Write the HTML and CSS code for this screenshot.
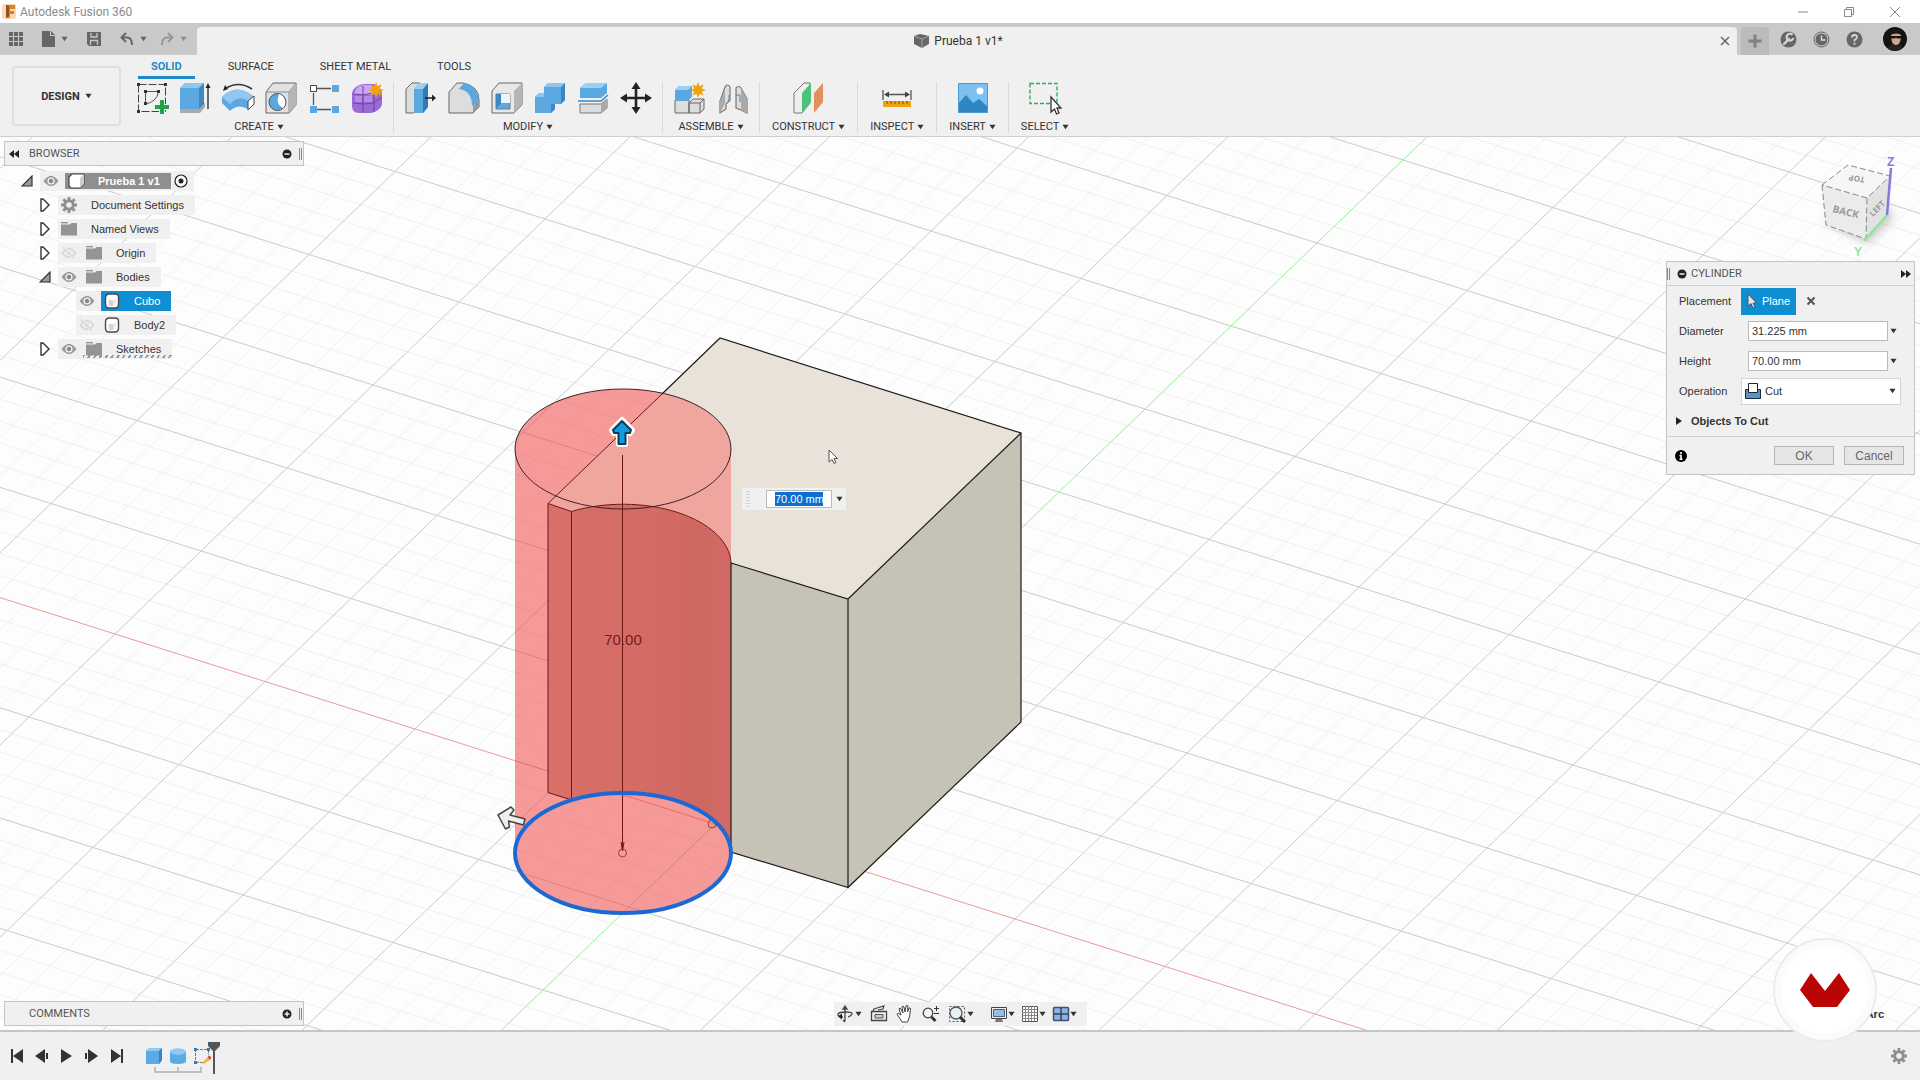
FILE: index.html
```html
<!DOCTYPE html>
<html lang="en">
<head>
	<meta charset="UTF-8">
	<meta name="viewport" content="width=device-width, initial-scale=1.0">
	<title>Autodesk Fusion 360</title>
	<link rel="stylesheet" href="styles.css">
</head>
<body>
	<!-- Shared symbols -->
	<svg class="symbols" aria-hidden="true">
		<symbol id="caret" viewBox="0 0 8 6"><path d="M0.5 0.5h7L4 5.5z" fill="currentColor"/></symbol>
		<symbol id="eye" viewBox="0 0 16 12">
			<path d="M0.5 6Q8-4 15.5 6Q8 16 0.5 6z" fill="#999"/>
			<circle cx="8" cy="6" r="3.6" fill="#f0f0f0"/><circle cx="8" cy="6" r="2.2" fill="#888"/>
		</symbol>
		<symbol id="eye-off" viewBox="0 0 16 12">
			<path d="M1.5 6Q8-2.5 14.5 6Q8 14.5 1.5 6z" fill="none" stroke="#d3d5d8" stroke-width="1.6"/>
			<circle cx="8" cy="6" r="2.2" fill="#d3d5d8"/><path d="M3 0l10 12" stroke="#f0f0f0" stroke-width="2.5"/><path d="M2 0.5l11 11" stroke="#d3d5d8" stroke-width="1.2"/>
		</symbol>
		<symbol id="folder" viewBox="0 0 16 14">
			<path d="M0 2.5h9l1.5-1.5H16v12.5H0z" fill="#949494"/><path d="M0 0.7h7" stroke="#949494" stroke-width="1.4"/>
		</symbol>
		<symbol id="body" viewBox="0 0 16 16">
			<path d="M1.5 4.5Q2 1 5 1H11Q14.5 1 14.5 4V11Q14.5 15 11 15H5Q1.5 15 1.5 11z" fill="#fff" stroke="#4a4a4a" stroke-width="1.4"/>
			<path d="M4.5 7h4.5v6H6Q4.5 13 4.5 11z" fill="#d5d5d5"/><path d="M9 7l3-2v6l-3 2z" fill="#ececec"/>
		</symbol>
		<symbol id="gear" viewBox="0 0 16 16">
			<circle cx="8" cy="8" r="4.3" fill="none" stroke="#8f8f8f" stroke-width="3"/>
			<path d="M8 0v3M8 13v3M0 8h3M13 8h3M2.3 2.3l2.2 2.2M11.5 11.5l2.2 2.2M13.7 2.3l-2.2 2.2M4.5 11.5l-2.2 2.2" stroke="#8f8f8f" stroke-width="2.8"/>
		</symbol>
		<symbol id="closed" viewBox="0 0 10 14"><path d="M1 1v12h2l6-6-6-6z" fill="#fff" stroke="#333" stroke-width="1.4"/></symbol>
		<symbol id="open" viewBox="0 0 12 12"><path d="M11 1v10H1z" fill="#999" stroke="#333" stroke-width="1.2"/></symbol>
		<symbol id="star" viewBox="0 0 16 16"><path d="M8 0l1.6 4.2 4.1-1.9-1.9 4.1L16 8l-4.2 1.6 1.9 4.1-4.1-1.9L8 16l-1.6-4.2-4.1 1.9 1.9-4.1L0 8l4.2-1.6-1.9-4.1 4.1 1.9z" fill="#f0a30a"/></symbol>
	</svg>

	<header class="titlebar">
		<svg class="app-logo" width="14" height="15" viewBox="0 0 14 15"><rect width="14" height="15" rx="2" fill="#fbd9b8"/><path d="M4 1h9v4H8v2h4v3H8v4H4z" fill="#d98324"/><path d="M4 1l3 1v10l-3 2z" fill="#8a5320"/></svg>
		<span class="app-name">Autodesk Fusion 360</span>
		<div class="window-buttons">
			<button aria-label="Minimize"><svg width="12" height="12" viewBox="0 0 12 12"><path d="M1 6h10" stroke="#888"/></svg></button>
			<button aria-label="Restore"><svg width="12" height="12" viewBox="0 0 12 12"><path d="M1.5 3.5h7v7h-7zM3.5 3.5v-2h7v7h-2" fill="none" stroke="#888"/></svg></button>
			<button aria-label="Close"><svg width="12" height="12" viewBox="0 0 12 12"><path d="M1 1l10 10M11 1L1 11" stroke="#888"/></svg></button>
		</div>
	</header>

	<div class="tabbar">
		<div class="quick">
			<button aria-label="Data panel"><svg width="14" height="14" viewBox="0 0 14 14" fill="#666"><path d="M0 0h4v4H0zM5 0h4v4H5zM10 0h4v4h-4zM0 5h4v4H0zM5 5h4v4H5zM10 5h4v4h-4zM0 10h4v4H0zM5 10h4v4H5zM10 10h4v4h-4z"/></svg></button>
			<button class="drop" aria-label="File"><svg width="13" height="16" viewBox="0 0 13 16"><path d="M0 0h8v5h5v11H0z" fill="#666"/><path d="M9 0l4 4H9z" fill="#666"/></svg><svg class="caret"><use href="#caret"/></svg></button>
			<button aria-label="Save"><svg width="14" height="14" viewBox="0 0 14 14"><path d="M0 0h14v14H2l-2-2z" fill="#666"/><path d="M4 1v4h6V1M3.5 13V8.5h7V13" fill="none" stroke="#c9c9c9" stroke-width="1.3"/></svg></button>
			<button class="drop" aria-label="Undo"><svg width="14" height="14" viewBox="0 0 14 14"><path d="M6 1L1.5 5.5 6 10M2 5.5h5q5 0 5 7.5" fill="none" stroke="#666" stroke-width="2"/></svg><svg class="caret"><use href="#caret"/></svg></button>
			<button class="drop faded" aria-label="Redo"><svg width="14" height="14" viewBox="0 0 14 14"><path d="M8 1l4.5 4.5L8 10M12 5.5H7q-5 0-5 7.5" fill="none" stroke="#777" stroke-width="2"/></svg><svg class="caret"><use href="#caret"/></svg></button>
		</div>
		<div class="doc-tab">
			<div class="doc-title">
				<svg width="16" height="16" viewBox="0 0 16 16"><path d="M0 3l6-2 9 2v8l-7 4-8-4z" fill="#666"/><path d="M0 3l8 3v9M8 6l7-3" fill="none" stroke="#a5a5a5"/></svg>
				<span>Prueba 1 v1*</span>
			</div>
			<button aria-label="Close document"><svg width="10" height="10" viewBox="0 0 10 10"><path d="M1 1l8 8M9 1L1 9" stroke="#666" stroke-width="1.5"/></svg></button>
		</div>
		<button class="new-tab" aria-label="New design"><svg width="14" height="14" viewBox="0 0 14 14"><path d="M7 0.5v13M0.5 7h13" stroke="#808080" stroke-width="3"/></svg></button>
		<div class="account">
			<button aria-label="Extensions"><svg width="17" height="17" viewBox="0 0 17 17"><circle cx="8.5" cy="8.5" r="8" fill="#666"/><path d="M4 13l5-5" stroke="#d5d5d5" stroke-width="2.4" stroke-linecap="round"/><path d="M12.5 3.8A3.4 3.4 0 1 0 13.3 7" fill="none" stroke="#d5d5d5" stroke-width="2.2"/></svg></button>
			<button aria-label="Job status"><svg width="17" height="17" viewBox="0 0 17 17"><circle cx="8.5" cy="8.5" r="7.5" fill="none" stroke="#666"/><circle cx="8.5" cy="8.5" r="6" fill="#666"/><path d="M8.5 4.5v4.5h4" fill="none" stroke="#ddd" stroke-width="1.4"/></svg></button>
			<button aria-label="Help"><svg width="17" height="17" viewBox="0 0 17 17"><circle cx="8.5" cy="8.5" r="8" fill="#666"/><path d="M6 6.5Q6 4 8.5 4T11 6.2Q11 7.5 8.5 9v1.5M8.5 11.7v2" fill="none" stroke="#d5d5d5" stroke-width="1.8"/></svg></button>
			<button class="avatar" aria-label="Profile"><svg width="24" height="24" viewBox="0 0 24 24"><circle cx="12" cy="12" r="12" fill="#151312"/><path d="M8 8q0-5 5-5t5 6q0 6-3 9h-4Q8 15 8 8z" fill="#d0a58d"/><path d="M7.5 8q0-6 6-6 5 1 5 6-5-3-11 0z" fill="#1d1714"/><path d="M8 9h10v2.500h-4l-1-1-1 1H8z" fill="#161616"/><path d="M5 22q1-5 6-5l2 2 2-2q4 0 4 4-6 5-14 1z" fill="#26221f"/></svg></button>
		</div>
	</div>

	<div class="ribbon">
		<button class="workspace">DESIGN <svg class="caret"><use href="#caret"/></svg></button>
		<div class="ribbon-main">
			<nav class="ribbon-tabs">
				<button class="active">SOLID</button>
				<button>SURFACE</button>
				<button>SHEET METAL</button>
				<button>TOOLS</button>
			</nav>
			<div class="groups">
				<section class="group">
					<div class="tools">
						<button aria-label="Create sketch"><svg class="tool" viewBox="0 0 32 32"><path d="M2.5 2.5h27v27h-27z" fill="none" stroke="#444" stroke-dasharray="8 2"/><path d="M9 9.5h14M9.5 9v13M9.5 22q11-2 13-12" fill="none" stroke="#555"/><path d="M1 1h3v3H1zM28 1h3v3h-3zM1 28h3v3H1zM8 8h3v3H8zM21 8h3v3h-3zM8 20h3v3H8z" fill="#333"/><path d="M26 18v14M19 25h14" stroke="#f0f0f0" stroke-width="6"/><path d="M26 18v14M19 25h14" stroke="#22a34a" stroke-width="4"/></svg></button>
						<button aria-label="Extrude"><svg class="tool" viewBox="0 0 32 32"><path d="M1 26v5h20l5-6v-4z" fill="#aaa"/><path d="M1 6l5-5h19v21l-5 5H1z" fill="#5ba7e0"/><path d="M1 6l5-5h19l-5 5z" fill="#8fc7f2"/><path d="M20 6l5-5v21l-5 5z" fill="#3b88c6"/><path d="M29 3v24" stroke="#222" stroke-width="1.3"/><path d="M26.5 6L29 1l2.5 5z" fill="#222"/></svg></button>
						<button aria-label="Revolve"><svg class="tool" viewBox="0 0 32 32"><path d="M0 15q15-15 32 0l-6 12q-10-6-18 2L0 21z" fill="#5ba7e0"/><path d="M0 15q15-15 32 0l-6 4q-9-6-18 3z" fill="#8fc7f2"/><path d="M26 19l6-5v8l-6 6z" fill="#fff" stroke="#444"/><path d="M3 7Q16-2 30 7" fill="none" stroke="#333" stroke-width="1.5"/><path d="M1 9l2-6 3 4z" fill="#222"/></svg></button>
						<button aria-label="Hole"><svg class="tool" viewBox="0 0 32 32"><path d="M1 10l7-9h23v22l-7 8H1z" fill="#e2e2e2" stroke="#666"/><path d="M1 10h23v21M24 10l7-9" fill="none" stroke="#888"/><path d="M24 10l7-9v22l-7 8z" fill="#b5b5b5"/><circle cx="12.5" cy="20" r="8.5" fill="#5ba7e0" stroke="#555"/><path d="M14 12a8.5 8.5 0 0 1 4 14q-8-4-4-14z" fill="#fff"/></svg></button>
						<button aria-label="Pattern"><svg class="tool" viewBox="0 0 32 32"><path d="M9 6.5h14M5.5 11v12M9 27.5h14" stroke="#555" stroke-width="1.3"/><path d="M2.5 3.5h6v6h-6z" fill="#fff" stroke="#444"/><path d="M24 3h7v7h-7zM2 24h7v7H2zM24 24h7v7h-7z" fill="#5ba7e0"/></svg></button>
						<button aria-label="Create form"><svg class="tool" viewBox="0 0 32 32"><path d="M1 12q0-4 4-7t8-3h10q8 4 8 10v9q0 4-4 7t-7 3H8q-7 0-7-7z" fill="#9a6bd6"/><path d="M3 12q1-7 9-9h9l4 5-3 5z" fill="#c9a6f2"/><path d="M4 14h7v6H4zM13 14h8v6h-8z" fill="#b58be8"/><path d="M2 12q10 2 21-1v19M2 21q10 2 21 0M12 4v27M23 21l8-6" fill="none" stroke="#6e42ab"/><use href="#star" x="17" y="0" width="16" height="16"/></svg></button>
					</div>
					<button class="group-label">CREATE <svg class="caret"><use href="#caret"/></svg></button>
				</section>
				<section class="group">
					<div class="tools">
						<button aria-label="Press pull"><svg class="tool" viewBox="0 0 32 32"><path d="M1 7l6-6h8v24l-6 6H1z" fill="#ddd" stroke="#666"/><path d="M9 7l5-6h9v24l-5 6H9z" fill="#5ba7e0"/><path d="M18 7l5-6v24l-5 6z" fill="#2f79b5"/><path d="M9 7l5-6h9l-5 6z" fill="#9bd0f5"/><path d="M20 16h8" stroke="#222" stroke-width="1.5"/><path d="M27 12.5l4 3.5-4 3.5z" fill="#222"/></svg></button>
						<button aria-label="Fillet"><svg class="tool" viewBox="0 0 32 32"><path d="M1 10l8-9h6q16 3 16 17v7l-6 6H1z" fill="#ddd" stroke="#666"/><path d="M11 7l5-6q14 2 15 19l-7 4Q24 9 11 7z" fill="#5ba7e0"/><path d="M25 24l6-6v7l-6 6z" fill="#999"/></svg></button>
						<button aria-label="Shell"><svg class="tool" viewBox="0 0 32 32"><path d="M1 9l7-8h23v22l-8 8H1z" fill="#e8e8e8" stroke="#666"/><path d="M23 9l8-8v22l-8 8z" fill="#b5b5b5"/><path d="M5 12h14v15H5z" fill="#5ba7e0" stroke="#777"/><path d="M10 12h9v9h-9z" fill="#eef5fb"/><path d="M5 12h5v9l-5 6z" fill="#3b88c6"/></svg></button>
						<button aria-label="Combine"><svg class="tool" viewBox="0 0 32 32"><path d="M1 15l4-4h5V5l4-4h17v17l-4 4h-6v5l-4 4H1z" fill="#5ba7e0"/><path d="M10 5l4-4h17l-4 4zM1 15l4-4h5v4z" fill="#8fc7f2"/><path d="M27 5l4-4v17l-4 4zM17 22h4v5l-4 4z" fill="#3b88c6"/></svg></button>
						<button aria-label="Split body"><svg class="tool" viewBox="0 0 32 32"><path d="M3 6l6-5h21v10l-6 5H3z" fill="#5ba7e0"/><path d="M3 6l6-5h21l-6 5z" fill="#9bd0f5"/><path d="M3 22h21l6-5v9l-6 5H3z" fill="#ddd" stroke="#777"/><path d="M24 22l6-5v9l-6 5z" fill="#aaa"/><path d="M1 19h23l7-6" fill="none" stroke="#3b88c6" stroke-width="1.6"/></svg></button>
						<button aria-label="Move"><svg class="tool" viewBox="0 0 32 32"><path d="M16 5v22M5 16h22" stroke="#222" stroke-width="2.6"/><path d="M16 0l4.5 7h-9zM16 32l4.5-7h-9zM0 16l7-4.5v9zM32 16l-7-4.5v9z" fill="#222"/></svg></button>
					</div>
					<button class="group-label">MODIFY <svg class="caret"><use href="#caret"/></svg></button>
				</section>
				<section class="group">
					<div class="tools">
						<button aria-label="New component"><svg class="tool" viewBox="0 0 32 32"><path d="M1 18h14v13H1zM15 21l4-4h11v10l-4 4H15z" fill="#ddd" stroke="#666"/><path d="M15 21h11v10M26 21l4-4" fill="none" stroke="#666"/><path d="M1 8l4-4h13v11l-4 4H1z" fill="#5ba7e0"/><path d="M1 8l4-4h13l-4 4z" fill="#9bd0f5"/><use href="#star" x="16" y="0" width="16" height="16"/></svg></button>
						<button aria-label="Joint"><svg class="tool" viewBox="0 0 32 32"><path d="M3 31V19L8 5q2-4 5 0v13l-4 4v5zM19 26V6q3-3 5 0l6 11v14l-6-3z" fill="#ddd" stroke="#777" stroke-width="1.2"/><path d="M24 6l6 11v14l-6-3zM8 8v13l-5 10V19z" fill="#aaa"/><path d="M12 13v7M19 13h4v7" fill="none" stroke="#3b88c6"/></svg></button>
					</div>
					<button class="group-label">ASSEMBLE <svg class="caret"><use href="#caret"/></svg></button>
				</section>
				<section class="group">
					<div class="tools">
						<button aria-label="Offset plane"><svg class="tool" viewBox="0 0 32 32"><path d="M1 11L11 1h6v20L9 31H1z" fill="#eee" stroke="#777"/><path d="M9 11L18 1v19L9 31z" fill="#4fc27a"/><path d="M21 11l9-10v19l-9 11z" fill="#e2905e"/></svg></button>
					</div>
					<button class="group-label">CONSTRUCT <svg class="caret"><use href="#caret"/></svg></button>
				</section>
				<section class="group">
					<div class="tools">
						<button aria-label="Measure"><svg class="tool" viewBox="0 0 32 32"><path d="M2 8v10M30 8v10M5 12.5h22" stroke="#555" stroke-width="1.3"/><path d="M3 12.5l5-3v6zM29 12.5l-5-3v6z" fill="#444"/><path d="M2 19h28v6H2z" fill="#f0a30a"/><path d="M6 19v3M10 19v3M14 19v3M18 19v3M22 19v3M26 19v3" stroke="#7c5200"/></svg></button>
					</div>
					<button class="group-label">INSPECT <svg class="caret"><use href="#caret"/></svg></button>
				</section>
				<section class="group">
					<div class="tools">
						<button aria-label="Insert image"><svg class="tool" viewBox="0 0 32 32"><path d="M1 1h30v30H1z" fill="#7cc0f0"/><path d="M1 22l8-9 7 8 6-4 9 8v6H1z" fill="#2f86c4"/><circle cx="23" cy="9" r="3.5" fill="#fff"/><path d="M1.5 1.5h29v29h-29z" fill="none" stroke="#4b9ad4"/></svg></button>
					</div>
					<button class="group-label">INSERT <svg class="caret"><use href="#caret"/></svg></button>
				</section>
				<section class="group">
					<div class="tools">
						<button aria-label="Select"><svg class="tool" viewBox="0 0 32 32"><path d="M1 1.5h27v20H1z" fill="none" stroke="#2fae5a" stroke-width="1.4" stroke-dasharray="4 2"/><path d="M22 15v15l3.5-3 2 5 2.5-1-2-5h4z" fill="#fff" stroke="#333" stroke-width="1.3"/></svg></button>
					</div>
					<button class="group-label">SELECT <svg class="caret"><use href="#caret"/></svg></button>
				</section>
			</div>
		</div>
	</div>

	<main class="viewport">
		<svg class="scene" viewBox="0 137 1920 893" preserveAspectRatio="xMidYMid slice">
			<defs>
				<linearGradient id="wall" x1="0" x2="1" y1="0" y2="0">
					<stop offset="0" stop-color="#d8716a"/><stop offset="0.6" stop-color="#d36a64"/><stop offset="0.8" stop-color="#cf6861"/><stop offset="1" stop-color="#d36a65"/>
				</linearGradient>
				<clipPath id="tool-body"><path d="M515 449a108 60 0 0 1 216 0V853a108 60 0 0 1-216 0z"/></clipPath>
			</defs>
			<path id="grid-minor" class="grid-minor"/>
			<path id="grid-major" class="grid-major"/>
			<path id="axis-x" class="axis-x"/>
			<path id="axis-y" class="axis-y"/>

			<!-- Cutting cylinder -->
			<path d="M515 449a108 60 0 0 1 216 0V853a108 60 0 0 1-216 0z" fill="#ee3536" fill-opacity="0.5"/>
			<path d="M548 792.5V503.5L571.5 511.5A108 60 0 0 1 731 563V853A108 60 0 0 0 571.5 800z" fill="url(#wall)"/>
			<path d="M548 503.5l23.5 8V800l-23.5-7.5z" fill="#d87069"/>

			<!-- Box -->
			<path d="M731 563l117 36v288.5L731 852zM848 599l173-166v289L848 887.5z" fill="#c6c2b5"/>
			<path d="M720 338l301 95-173 166-117-36A108 60 0 0 0 571.5 511.5L548 503.5z" fill="#e8e2d9"/>
			<path d="M720 338l301 95-173 166-117-36A108 60 0 0 0 571.5 511.5L548 503.5z" fill="#f0a59f" clip-path="url(#tool-body)"/>
			<path class="edge" d="M662 394l58-56 301 95-173 166-117-36V852l117 35.5V599M1021 433v289L848 887.5"/>
			<path class="edge-cut" d="M662 394L548 503.5v289l23.5 7.5V511.5L548 503.5M571.5 511.5A108 60 0 0 1 731 563M622.5 455V850M621 842l1.5 9 1.5-9"/>
			<ellipse cx="623" cy="449" rx="108" ry="60" fill="none" stroke="#3b2323"/>
			<circle cx="712" cy="824" r="4" class="point"/>
			<ellipse cx="623" cy="853" rx="108" ry="60" fill="none" stroke="#1c68d4" stroke-width="4"/>
			<circle cx="622.5" cy="853" r="4" class="point"/>
			<text class="dimension" x="623" y="645" text-anchor="middle">70.00</text>

			<path d="M622 420l10 10-2 3-5-3v14h-6v-14l-5 3-2-3z" fill="#fff" stroke="#fff" stroke-width="6" stroke-linejoin="round"/>
			<path d="M622 421l9 9-1 3h-4.5v11h-7v-11H614l-1-3z" fill="#1399dc" stroke="#0f3f58" stroke-width="2" stroke-linejoin="round"/>
			<path d="M498 815l13-8 3 3-4 5 15 4-1.5 6-15-4 1 6-4 2z" fill="#eee" stroke="#444" stroke-width="1.5" stroke-linejoin="round"/>
			<path d="M829 450v12l3-2.5 2 4 2-1-2-4h3.5z" fill="#fff" stroke="#555"/>
		</svg>

		<div class="value-popup">
			<span class="grip"></span>
			<span class="value-box"><input type="text" value="70.00 mm" aria-label="Height value"></span>
			<button aria-label="Value options"><svg class="caret"><use href="#caret"/></svg></button>
		</div>

		<aside class="browser">
			<header class="panel-bar">
				<button aria-label="Collapse browser"><svg width="10" height="8" viewBox="0 0 10 8"><path d="M5 0v8L0 4zM10 0v8L5 4z" fill="#222"/></svg></button>
				<h2>BROWSER</h2>
				<button aria-label="Hide browser"><svg width="10" height="10" viewBox="0 0 10 10"><circle cx="5" cy="5" r="4.5" fill="#222"/><path d="M2.5 5h5" stroke="#eee" stroke-width="1.5"/></svg></button>
				<span class="handle"></span>
			</header>
			<ul class="tree">
				<li class="row">
					<button class="toggle" aria-label="Collapse"><svg width="12" height="12"><use href="#open"/></svg></button>
					<span class="chip"><span class="slot"><svg width="16" height="12"><use href="#eye"/></svg></span>
						<span class="name root"><span class="slot"><svg width="17" height="16" viewBox="0 0 17 16"><path d="M1 4l3-3h12v10l-4 4H3l-2-2z" fill="#fff" stroke="#444" stroke-width="1.2"/><path d="M12 5l4-4v10l-4 4z" fill="#ccc"/></svg></span>Prueba 1 v1</span>
						<svg class="radio" width="14" height="14" viewBox="0 0 14 14"><circle cx="7" cy="7" r="6" fill="#fff" stroke="#222" stroke-width="1.2"/><circle cx="7" cy="7" r="2.5" fill="#222"/></svg></span>
				</li>
				<li class="row level-1">
					<button class="toggle" aria-label="Expand"><svg width="10" height="14"><use href="#closed"/></svg></button>
					<span class="chip"><span class="name"><span class="slot"><svg width="16" height="16"><use href="#gear"/></svg></span>Document Settings</span></span>
				</li>
				<li class="row level-1">
					<button class="toggle" aria-label="Expand"><svg width="10" height="14"><use href="#closed"/></svg></button>
					<span class="chip"><span class="name"><span class="slot"><svg width="16" height="14"><use href="#folder"/></svg></span>Named Views</span></span>
				</li>
				<li class="row level-1">
					<button class="toggle" aria-label="Expand"><svg width="10" height="14"><use href="#closed"/></svg></button>
					<span class="chip"><span class="slot"><svg width="16" height="12"><use href="#eye-off"/></svg></span>
						<span class="name"><span class="slot"><svg width="16" height="14"><use href="#folder"/></svg></span>Origin</span></span>
				</li>
				<li class="row level-1">
					<button class="toggle" aria-label="Collapse"><svg width="12" height="12"><use href="#open"/></svg></button>
					<span class="chip"><span class="slot"><svg width="16" height="12"><use href="#eye"/></svg></span>
						<span class="name"><span class="slot"><svg width="16" height="14"><use href="#folder"/></svg></span>Bodies</span></span>
				</li>
				<li class="row level-2">
					<span class="toggle"></span>
					<span class="chip"><span class="slot"><svg width="16" height="12"><use href="#eye"/></svg></span>
						<span class="name selected"><span class="slot"><svg width="16" height="16"><use href="#body"/></svg></span>Cubo</span></span>
				</li>
				<li class="row level-2">
					<span class="toggle"></span>
					<span class="chip"><span class="slot"><svg width="16" height="12"><use href="#eye-off"/></svg></span>
						<span class="name"><span class="slot"><svg width="16" height="16"><use href="#body"/></svg></span>Body2</span></span>
				</li>
				<li class="row level-1">
					<button class="toggle" aria-label="Expand"><svg width="10" height="14"><use href="#closed"/></svg></button>
					<span class="chip"><span class="slot"><svg width="16" height="12"><use href="#eye"/></svg></span>
						<span class="name hatched"><span class="slot"><svg width="16" height="14"><use href="#folder"/></svg></span>Sketches</span></span>
				</li>
			</ul>
		</aside>

		<svg class="view-cube" width="90" height="110" viewBox="1815 150 90 110">
			<defs><filter id="soft" x="-30%" y="-30%" width="160%" height="160%"><feGaussianBlur stdDeviation="4"/></filter></defs>
			<path d="M1824 222l44 22 26-26-12-20z" fill="#999" fill-opacity="0.5" filter="url(#soft)"/>
			<path d="M1822 185l26-20 42 11-23 22z" fill="#f6f6f6"/>
			<path d="M1822 185l45 13-1 41-40-14z" fill="#ebebeb"/>
			<path d="M1867 198l23-22-3 39-21 24z" fill="#e2e2e2"/>
			<path d="M1822 185l26-20 42 11-23 22zM1822 185l4 40 40 14 1-41M1890 176l-3 39" fill="none" stroke="#888" stroke-dasharray="6 3"/>
			<path d="M1891 168l-4 47" stroke="#8179dd" stroke-width="2.5"/>
			<path d="M1887 215l-23 26" stroke="#8fe698" stroke-width="2.5"/>
			<text class="axis-label z" x="1887" y="166">Z</text>
			<text class="axis-label y" x="1854" y="256">Y</text>
			<text class="face" transform="translate(1832 212) rotate(14)">BACK</text>
			<text class="face small" transform="translate(1865 177) rotate(188)">TOP</text>
			<text class="face small" transform="translate(1873 217) rotate(-46)">LEFT</text>
		</svg>

		<form class="dialog" onsubmit="return false">
			<header class="dialog-bar">
				<span class="handle"></span>
				<svg width="10" height="10" viewBox="0 0 10 10"><circle cx="5" cy="5" r="4.5" fill="#222"/><path d="M2.5 5h5" stroke="#eee" stroke-width="1.5"/></svg>
				<h2>CYLINDER</h2>
				<button type="button" aria-label="Expand dialog"><svg width="10" height="8" viewBox="0 0 10 8"><path d="M0 0v8l5-4zM5 0v8l5-4z" fill="#222"/></svg></button>
			</header>
			<div class="fields">
				<div class="field">
					<label for="plane">Placement</label>
					<button type="button" id="plane" class="plane"><svg width="10" height="16" viewBox="0 0 10 16"><path d="M1 1v12l3-2.5 2 4.5 2-1-2-4h3.5z" fill="#e6e6e6" stroke="#345" stroke-width="0.8"/></svg>Plane</button>
					<button type="button" class="clear" aria-label="Clear plane"><svg width="10" height="10" viewBox="0 0 10 10"><path d="M1.5 1.5l7 7M8.5 1.5l-7 7" stroke="#555" stroke-width="2"/></svg></button>
				</div>
				<div class="field">
					<label for="diameter">Diameter</label>
					<input type="text" id="diameter" value="31.225 mm">
					<button type="button" aria-label="Diameter options"><svg class="caret"><use href="#caret"/></svg></button>
				</div>
				<div class="field">
					<label for="height">Height</label>
					<input type="text" id="height" value="70.00 mm">
					<button type="button" aria-label="Height options"><svg class="caret"><use href="#caret"/></svg></button>
				</div>
				<div class="field">
					<label for="operation">Operation</label>
					<div class="combo">
						<svg width="16" height="16" viewBox="0 0 16 16"><path d="M0.5 6.5h15v9H0.5z" fill="#5a93c4" stroke="#1b2a3a"/><path d="M3.5 0.5h9v9h-9z" fill="#fff" stroke="#222"/></svg>
						<select id="operation"><option>Cut</option><option>Join</option><option>New Body</option></select>
						<svg class="caret"><use href="#caret"/></svg>
					</div>
				</div>
				<button type="button" class="objects"><svg width="6" height="8" viewBox="0 0 6 8"><path d="M0 0v8l6-4z" fill="#222"/></svg>Objects To Cut</button>
			</div>
			<footer class="dialog-actions">
				<svg width="12" height="12" viewBox="0 0 12 12"><circle cx="6" cy="6" r="6" fill="#000"/><path d="M6 2v2M4.5 5.5H6V9M4.5 9.2h3" fill="none" stroke="#fff" stroke-width="1.6"/></svg>
				<button>OK</button>
				<button type="button">Cancel</button>
			</footer>
		</form>

		<section class="comments panel-bar">
			<h2>COMMENTS</h2>
			<button aria-label="Show comments"><svg width="10" height="10" viewBox="0 0 10 10"><circle cx="5" cy="5" r="4.5" fill="#222"/><path d="M2.5 5h5M5 2.5v5" stroke="#eee" stroke-width="1.5"/></svg></button>
			<span class="handle"></span>
		</section>

		<nav class="nav-tools">
			<button class="drop" aria-label="Orbit"><svg width="18" height="18" viewBox="0 0 18 18"><path d="M9 2v14M9 1l-2 3h4zM9 17l-2-2" fill="none" stroke="#444" stroke-width="1.3"/><path d="M7 12Q1 11 2 9t8-2 6 2-4 3" fill="none" stroke="#444" stroke-width="1.3"/><path d="M6 8.5v6l-4-3z" fill="#222"/></svg><svg class="caret"><use href="#caret"/></svg></button>
			<button aria-label="Look at"><svg width="18" height="18" viewBox="0 0 18 18"><path d="M1.5 6.5h15v9h-15z" fill="#eee" stroke="#444" stroke-width="1.3"/><path d="M5 9.5h8v3.5H5z" fill="#ccc" stroke="#555"/><path d="M3 6l1-2 3-1 7-2-1 3-5 1" fill="none" stroke="#444" stroke-width="1.2"/></svg></button>
			<button aria-label="Pan"><svg width="18" height="18" viewBox="0 0 18 18"><path d="M6 17l-5-8q1-1.5 4 1L3 4q1-1.5 2 0l2 4-1-6q1-1.5 2 0l1 5 1-6q1-1 2 0l-.5 6L13 3q1.5-.5 1.5 1L13.5 12l-2 5z" fill="#fff" stroke="#444"/></svg></button>
			<button aria-label="Zoom"><svg width="18" height="18" viewBox="0 0 18 18"><circle cx="6" cy="8" r="4.8" fill="#eef4f8" stroke="#444" stroke-width="1.3"/><path d="M9.5 12l4 4" stroke="#333" stroke-width="2.8"/><path d="M14.500 1v5M12 3.500h5M12 8.500h5" stroke="#333"/></svg></button>
			<button class="drop" aria-label="Zoom window"><svg width="18" height="18" viewBox="0 0 18 18"><path d="M1.5 1.5h15v15h-15z" fill="none" stroke="#555" stroke-dasharray="2 2"/><circle cx="8" cy="8" r="6" fill="#e6f0f5" stroke="#555" stroke-width="1.3"/><path d="M12 12l5 5" stroke="#333" stroke-width="3"/></svg><svg class="caret"><use href="#caret"/></svg></button>
			<span></span>
			<button class="drop tight" aria-label="Display settings"><svg width="18" height="18" viewBox="0 0 18 18"><path d="M1.5 2.5h15v11h-15z" fill="#eee" stroke="#444"/><path d="M3.5 4.5h11v7h-11z" fill="#9bbbe8" stroke="#467"/><path d="M6 14h6l1 3H5z" fill="#777"/></svg><svg class="caret"><use href="#caret"/></svg></button>
			<button class="drop tight" aria-label="Grid and snaps"><svg width="18" height="18" viewBox="0 0 18 18"><path d="M1.5 1.5h15v15h-15z" fill="#fff" stroke="#555"/><path d="M4.5 1v15M7.5 1v15M10.5 1v15M13.5 1v15M1 4.5h15M1 7.5h15M1 10.5h15M1 13.5h15" stroke="#888"/></svg><svg class="caret"><use href="#caret"/></svg></button>
			<button class="drop tight" aria-label="Viewports"><svg width="18" height="18" viewBox="0 0 18 18"><rect x="1.5" y="2.5" width="15" height="13" rx="1" fill="#8fb2e6" stroke="#3f516c" stroke-width="1.5"/><path d="M9 3v12M2 9h14" stroke="#2f4160" stroke-width="1.5"/></svg><svg class="caret"><use href="#caret"/></svg></button>
		</nav>

		<span class="hint">Arc</span>
		<svg class="badge" width="104" height="104" viewBox="0 0 104 104">
			<circle cx="52" cy="52" r="51" fill="#fbfbfb" stroke="#ececec" stroke-width="2"/>
			<circle cx="52" cy="52" r="44" fill="#fff"/>
			<path d="M27 52l11-17 14 18 14-18 11 17-13 17H40z" fill="#b90504"/>
		</svg>
	</main>

	<footer class="timeline">
		<div class="playback">
			<button aria-label="Go to start"><svg width="14" height="14" viewBox="0 0 14 14" fill="#333"><path d="M1 0h2v14H1zM13 0v14L3 7z"/></svg></button>
			<button aria-label="Step back"><svg width="14" height="14" viewBox="0 0 14 14" fill="#333"><path d="M10 0v14L0 7zM11 4h2v6h-2z"/></svg></button>
			<button aria-label="Play"><svg width="14" height="14" viewBox="0 0 14 14" fill="#333"><path d="M1 0v14l11-7z"/></svg></button>
			<button aria-label="Step forward"><svg width="14" height="14" viewBox="0 0 14 14" fill="#333"><path d="M0 4h2v6H0zM3 0v14l10-7z"/></svg></button>
			<button aria-label="Go to end"><svg width="14" height="14" viewBox="0 0 14 14" fill="#333"><path d="M1 0v14l10-7zM11 0h2v14h-2z"/></svg></button>
		</div>
		<div class="history">
			<button aria-label="Box"><svg width="18" height="18" viewBox="0 0 18 18"><path d="M1 4l3-3h13v12l-3 4H1z" fill="#5aaae6"/><path d="M1 4l3-3h13l-3 3z" fill="#8fcaf5"/><path d="M14 4l3-3v12l-3 4z" fill="#3585c4"/></svg></button>
			<button aria-label="Cylinder"><svg width="18" height="18" viewBox="0 0 18 18"><path d="M1 4v10q0 3 8 3t8-3V4z" fill="#5aaae6"/><ellipse cx="9" cy="4.5" rx="8" ry="3.2" fill="#8fcaf5"/></svg></button>
			<button aria-label="Sketch"><svg width="18" height="18" viewBox="0 0 18 18"><path d="M3 2.5h13M2.5 2v13M3 15.5h7M15.5 3v5" stroke="#777" stroke-dasharray="3 1"/><path d="M1 1h3v3H1zM14 1h3v3h-3zM1 14h3v3H1z" fill="#3b7cb0"/><path d="M9 16l6-6 2.5 2.5L11 17z" fill="#f3b13c"/><path d="M14.5 10l2-1.5 2 2-1.5 2z" fill="#d6453c"/></svg></button>
			<span class="bracket"></span>
			<svg class="marker" width="12" height="32" viewBox="0 0 12 32"><path d="M0 0h12v4L7 9V32H5V9L0 4z" fill="#555"/></svg>
		</div>
		<button class="settings" aria-label="Timeline settings"><svg width="16" height="16"><use href="#gear"/></svg></button>
	</footer>
	<script src="grid.js"></script>
</body>
</html>
```

FILE: styles.css
```css
/* General styles */
* {
	box-sizing: border-box;
}
body {
	margin: 0;
	height: 100vh;
	display: flex;
	flex-direction: column;
	overflow: hidden;
	font-family: "Liberation Sans", Arial, sans-serif;
	font-size: 11px;
	color: #333;
	background: #f0f0f0;
}
button {
	display: flex;
	align-items: center;
	justify-content: center;
	padding: 0;
	border: 0;
	background: none;
	color: inherit;
	font: inherit;
	cursor: pointer;
}
input,
select {
	font: inherit;
	color: inherit;
}
h2 {
	margin: 0;
	font-family: Roboto, sans-serif;
	font-size: 11px;
	font-weight: 400;
	color: #555;
}
svg {
	flex: none;
	display: block;
}
.symbols {
	position: absolute;
	width: 0;
	height: 0;
}
.caret {
	width: 7px;
	height: 6px;
}

/* Title bar */
.titlebar {
	display: flex;
	align-items: center;
	height: 23px;
	padding-left: 2px;
	background: #fff;
	font-family: Roboto, sans-serif;
	font-size: 12px;
	color: #8c8c8c;
}
.app-name {
	flex: 1;
	margin-left: 4px;
}
.window-buttons {
	display: flex;
	padding-right: 2px;
}
.window-buttons button {
	width: 46px;
	height: 22px;
}

/* Document tabs */
.tabbar {
	display: flex;
	align-items: flex-end;
	height: 32px;
	background: #c9c9c9;
}
.quick {
	display: flex;
	align-items: center;
	width: 197px;
	height: 32px;
	padding-left: 9px;
	color: #666;
}
.quick button {
	gap: 6px;
	margin-right: 19px;
}
.quick button:nth-child(4) {
	margin-right: 13px;
}
.quick .faded {
	margin-right: 0;
	opacity: 0.6;
}
.doc-tab {
	flex: 1;
	display: flex;
	align-items: center;
	height: 28px;
	padding-right: 7px;
	border-radius: 4px 4px 0 0;
	background: #f0f0f0;
}
.doc-title {
	flex: 1;
	display: flex;
	align-items: center;
	justify-content: center;
	gap: 4px;
	font-family: Roboto, sans-serif;
	font-size: 12px;
}
.new-tab {
	width: 28px;
	height: 28px;
	margin-left: 4px;
	border-radius: 4px 4px 0 0;
	background: #bbb;
}
.account {
	display: flex;
	align-items: center;
	gap: 16px;
	height: 32px;
	padding: 0 13px 0 11px;
}
.avatar {
	margin-left: 4px;
}

/* Ribbon */
.ribbon {
	display: flex;
	height: 82px;
	border-bottom: 1px solid #cfcfcf;
	font-family: Roboto, sans-serif;
}
.workspace {
	width: 109px;
	height: 60px;
	margin: 11px 4px 0 12px;
	gap: 5px;
	border: 2px solid #dedede;
	border-radius: 4px;
	font-weight: 700;
}
.ribbon-tabs {
	display: flex;
	gap: 20px;
	padding-left: 13px;
}
.ribbon-tabs button {
	height: 24px;
	padding: 2px 13px 0;
	border-bottom: 3px solid transparent;
}
.ribbon-tabs .active {
	border-color: #1f8ac9;
	color: #1f8ac9;
	font-weight: 700;
}
.groups {
	display: flex;
	padding-top: 3px;
}
.group {
	display: flex;
	flex-direction: column;
	align-items: center;
	height: 51px;
	padding: 0 5px;
	border-right: 1px solid #d9d9d9;
}
.group:last-child {
	border-right: 0;
}
.tools {
	display: flex;
}
.tools button {
	width: 43px;
}
.tool {
	width: 32px;
	height: 32px;
	overflow: visible;
}
.group-label {
	gap: 3px;
	height: 16px;
	margin-top: 6px;
	padding: 0 7px;
}

/* Viewport */
.viewport {
	position: relative;
	z-index: 1;
	flex: 1;
	min-height: 0;
	background: #fdfdfd;
}
.scene {
	position: absolute;
	inset: 0;
	width: 100%;
	height: 100%;
	overflow: hidden;
}
.grid-minor {
	fill: none;
	stroke: #f0f0f0;
}
.grid-major {
	fill: none;
	stroke: #cbcbcb;
}
.axis-x {
	stroke: #ee9a9a;
}
.axis-y {
	stroke: #9aec9a;
}
.edge {
	fill: none;
	stroke: #1c1c1c;
	stroke-width: 1.2;
}
.edge-cut {
	fill: none;
	stroke: #701414;
}
.point {
	fill: none;
	stroke: #a33a3a;
}
.dimension {
	font-size: 15px;
	fill: #741c1c;
}
.view-cube {
	position: absolute;
	top: 13px;
	right: 15px;
}
.axis-label {
	font-size: 12px;
	font-weight: 700;
}
.z {
	fill: #8179dd;
}
.y {
	fill: #8fe698;
}
.face {
	font-family: "Open Sans", sans-serif;
	font-size: 10px;
	font-weight: 700;
	fill: #999;
}
.small {
	font-size: 8px;
}

/* Floating value input */
.value-popup {
	position: absolute;
	left: 742px;
	top: 351px;
	display: flex;
	align-items: center;
	width: 104px;
	height: 22px;
	padding-bottom: 1px;
	background: #f0f0f0;
}
.grip {
	width: 4px;
	height: 16px;
	margin: 0 16px 0 4px;
	background: repeating-linear-gradient(#d5d5d5 0 1px, transparent 1px 3px);
}
.value-box {
	display: flex;
	justify-content: center;
	width: 66px;
	padding: 1px;
	border: 1px solid #bbb;
	background: #fff;
}
.value-box input {
	width: 48px;
	height: 14px;
	padding: 0;
	border: 0;
	background: #0a6fd0;
	color: #fff;
}
.value-popup button {
	margin-left: 4px;
}

/* Browser panel */
.browser {
	position: absolute;
	left: 4px;
	top: 4px;
	width: 300px;
}
.panel-bar {
	display: flex;
	align-items: center;
	gap: 10px;
	height: 25px;
	padding: 0 1px 0 4px;
	border: 1px solid #c4c4c4;
	background: #f0f0f0;
}
.panel-bar h2 {
	flex: 1;
}
.handle {
	width: 3px;
	height: 12px;
	margin-left: -3px;
	border: solid #888;
	border-width: 0 1px;
}
.tree {
	margin: 3px 0 0;
	padding: 0 0 0 14px;
	list-style: none;
}
.row {
	display: flex;
	align-items: center;
	height: 24px;
}
.level-1 {
	padding-left: 18px;
}
.level-2 {
	padding-left: 36px;
}
.toggle {
	width: 22px;
	padding-right: 5px;
}
.chip {
	display: flex;
	align-items: center;
	gap: 3px;
	height: 20px;
	background: #f0f0f0;
}
.slot {
	display: flex;
	justify-content: center;
	width: 22px;
}
.name {
	display: flex;
	align-items: center;
	gap: 11px;
	height: 20px;
	padding-right: 11px;
}
.root {
	height: 16px;
	background: #8f8f8f;
	color: #fff;
	font-weight: 700;
}
.radio {
	margin-right: 6px;
}
.selected {
	background: #0f8fd3;
	color: #fff;
}
.hatched {
	background: repeating-linear-gradient(120deg, #8a97b5 0 2px, transparent 2px 5px) left 16px / 100% 3px no-repeat;
}

/* Cylinder dialog */
.dialog {
	position: absolute;
	right: 5px;
	top: 124px;
	width: 249px;
	border: 1px solid #c4c4c4;
	background: #f0f0f0;
}
.dialog-bar {
	display: flex;
	align-items: center;
	gap: 4px;
	height: 24px;
	padding: 0 3px;
	border-bottom: 1px solid #d0d0d0;
}
.dialog-bar .handle {
	margin-right: 3px;
}
.dialog-bar h2 {
	flex: 1;
}
.fields {
	padding: 0 12px;
	border-bottom: 1px solid #d0d0d0;
}
.field {
	display: flex;
	align-items: center;
	height: 30px;
}
.field label {
	width: 62px;
}
.plane {
	gap: 5px;
	width: 55px;
	height: 27px;
	background: #0f8fd3;
	color: #fff;
}
.clear {
	margin-left: 10px;
}
.field input {
	width: 140px;
	height: 20px;
	margin: 0 2px 0 7px;
	padding: 0 3px 1px;
	border: 1px solid #bbb;
	background: #fff;
}
.combo {
	display: flex;
	align-items: center;
	width: 160px;
	height: 27px;
	padding: 0 4px 0 3px;
	border: 1px solid #d5d5d5;
	background: #fff;
}
.combo select {
	flex: 1;
	padding: 0 4px;
	border: 0;
	background: none;
	appearance: none;
}
.objects {
	gap: 9px;
	height: 30px;
	margin-left: -3px;
	font-weight: 700;
}
.dialog-actions {
	display: flex;
	align-items: center;
	gap: 10px;
	height: 37px;
	padding: 0 10px 0 8px;
}
.dialog-actions svg {
	margin-right: auto;
}
.dialog-actions button {
	width: 60px;
	height: 19px;
	border: 1px solid #b5b5b5;
	background: #e6e6e6;
	font-size: 12px;
	color: #666;
}

/* Bottom of the viewport */
.comments {
	position: absolute;
	left: 4px;
	bottom: 4px;
	width: 300px;
	padding-left: 24px;
}
.nav-tools {
	position: absolute;
	left: 50%;
	bottom: 4px;
	display: flex;
	align-items: center;
	gap: 8px;
	height: 24px;
	margin-left: -126px;
	padding: 0 12px 0 2px;
	background: #f0f0f0;
}
.nav-tools .drop {
	gap: 1px;
}
.nav-tools .tight {
	gap: 0;
	margin-right: -2px;
}
.hint {
	position: absolute;
	right: 36px;
	bottom: 10px;
	font-weight: 700;
}
.badge {
	position: absolute;
	right: 43px;
	bottom: -12px;
}

/* Timeline */
.timeline {
	display: flex;
	align-items: center;
	height: 50px;
	padding: 0 13px 0 10px;
	border-top: 2px solid #c6c6c6;
	background: #f0f0f0;
}
.playback {
	display: flex;
	gap: 11px;
}
.history {
	position: relative;
	display: flex;
	gap: 6px;
	margin-left: 21px;
}
.bracket {
	position: absolute;
	left: 9px;
	top: 20px;
	width: 48px;
	height: 6px;
	border: 2px solid #c0c0c0;
	border-top: 0;
	background: linear-gradient(#c0c0c0, #c0c0c0) center / 2px 6px no-repeat;
}
.marker {
	position: absolute;
	left: 63px;
	top: -5px;
}
.settings {
	margin-left: auto;
}
```

FILE: grid.js
```javascript
// Ground grid in parallel projection, U follows the red axis and V the green one
const origin = [715, 824];
const U = [150, 47.5];
const V = [86, -83];
const REACH = 20;

function line(u1, v1, u2, v2) {
	const x1 = origin[0] + u1 * U[0] + v1 * V[0];
	const y1 = origin[1] + u1 * U[1] + v1 * V[1];
	const x2 = origin[0] + u2 * U[0] + v2 * V[0];
	const y2 = origin[1] + u2 * U[1] + v2 * V[1];
	return `M${x1} ${y1}L${x2} ${y2}`;
}

let minor = "";
let major = "";
for (let i = -REACH * 5; i <= REACH * 5; i++) {
	const lines = line(i / 5, -REACH, i / 5, REACH) + line(-REACH, i / 5, REACH, i / 5);
	if (i % 5) {
		minor += lines;
	} else if (i) {
		major += lines;
	}
}

document.getElementById("grid-minor").setAttribute("d", minor);
document.getElementById("grid-major").setAttribute("d", major);
document.getElementById("axis-x").setAttribute("d", line(-REACH, 0, REACH, 0));
document.getElementById("axis-y").setAttribute("d", line(0, -REACH, 0, REACH));
```
